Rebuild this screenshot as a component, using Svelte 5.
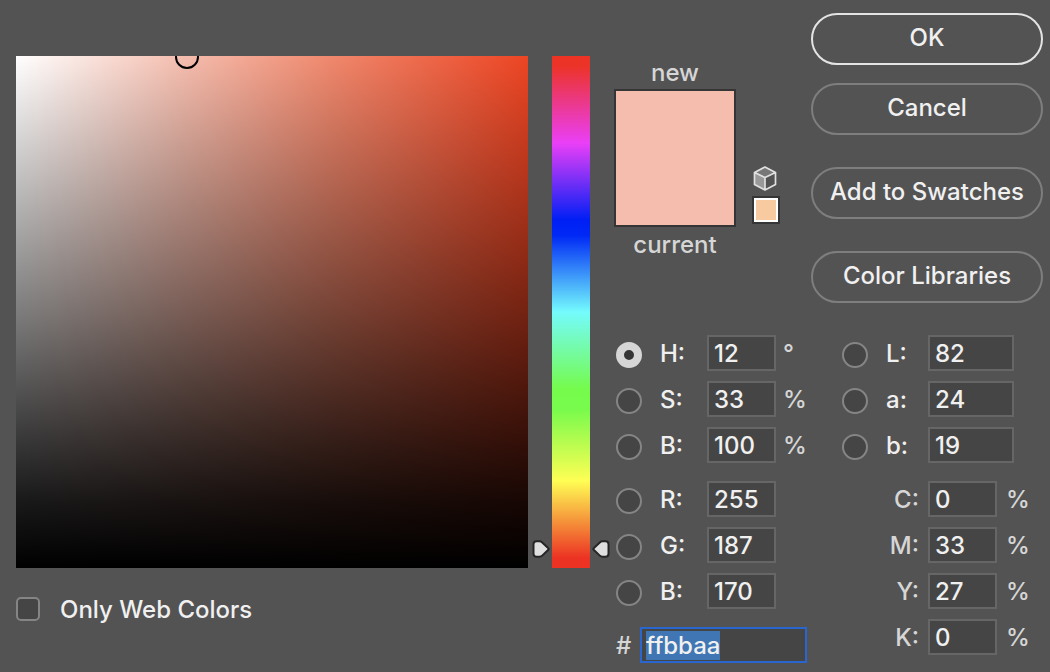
<script lang="ts">
  import { onMount } from 'svelte';

  let channel = $state('h');
  let webOnly = $state(false);
  let hue = $state(12);
  let hex = $state('ffbbaa');
  let marker = $state({ x: 33.4, y: 0.2 });
  let hexInput: HTMLInputElement;

  const hsb = [
    { id: 'h', label: 'H:', value: '12', unit: '°' },
    { id: 's', label: 'S:', value: '33', unit: '%' },
    { id: 'v', label: 'B:', value: '100', unit: '%' }
  ];
  const rgb = [
    { id: 'r', label: 'R:', value: '255', unit: '' },
    { id: 'g', label: 'G:', value: '187', unit: '' },
    { id: 'b', label: 'B:', value: '170', unit: '' }
  ];
  const lab = [
    { id: 'lab-l', label: 'L:', value: '82' },
    { id: 'lab-a', label: 'a:', value: '24' },
    { id: 'lab-b', label: 'b:', value: '19' }
  ];
  const cmyk = [
    { id: 'c', label: 'C:', value: '0' },
    { id: 'm', label: 'M:', value: '33' },
    { id: 'y', label: 'Y:', value: '27' },
    { id: 'k', label: 'K:', value: '0' }
  ];

  // the strip runs from 360 at the top to 0 at the bottom
  let huePos = $derived(((360 - hue) / 360) * 100);

  function pick(e: MouseEvent) {
    const box = (e.currentTarget as HTMLElement).getBoundingClientRect();
    marker = {
      x: ((e.clientX - box.left) / box.width) * 100,
      y: ((e.clientY - box.top) / box.height) * 100
    };
  }

  onMount(() => {
    hexInput.focus();
    hexInput.select();
  });
</script>

<main class="dialog">
  <section class="left">
    <div class="pickers">
      <button class="field" aria-label="Saturation and brightness" onclick={pick}>
        <span class="marker" style="left:{marker.x}%; top:{marker.y}%"></span>
      </button>
      <div class="hue">
        <div class="strip"></div>
        <input type="range" min="0" max="360" bind:value={hue} aria-label="Hue" />
        <svg class="arrow start" style="top:{huePos}%" width="18" height="18" viewBox="0 0 18 18">
          <path d="M4.500 1.300H7.500Q9 1.300 10.200 2.400L16.300 8.200Q17.200 9 16.300 9.800L10.200 15.600Q9 16.700 7.500 16.700H4.500Q1.500 16.700 1.500 13.700V4.300Q1.500 1.300 4.500 1.300Z" />
        </svg>
        <svg class="arrow end" style="top:{huePos}%" width="18" height="18" viewBox="0 0 18 18">
          <path d="M13.500 1.300H10.500Q9 1.300 7.800 2.400L1.700 8.200Q.8 9 1.700 9.800L7.800 15.600Q9 16.700 10.500 16.700H13.500Q16.500 16.700 16.500 13.700V4.300Q16.500 1.300 13.500 1.300Z" />
        </svg>
      </div>
    </div>
    <label class="web">
      <input type="checkbox" bind:checked={webOnly} />
      <span>Only Web Colors</span>
    </label>
  </section>

  <section class="right">
    <div class="top">
      <div class="preview">
        <span>new</span>
        <div class="swatch"></div>
        <span>current</span>
      </div>
      <div class="safe">
        <button class="cube" aria-label="Not a web safe color">
          <svg width="26" height="26" viewBox="0 0 26 26">
            <path d="M2.500 7.500L13 12.500V25L2.500 19.500Z" fill="#999" />
            <path d="M13 2L23.500 7.500L13 12.500L2.500 7.500Z" fill="#777" />
            <path d="M13 2L23.500 7.500V19.500L13 25L2.500 19.500V7.500ZM2.500 7.500L13 12.500L23.500 7.500M13 12.500V25" fill="none" stroke="#e0e0e0" stroke-width="1.700" stroke-linejoin="round" />
          </svg>
        </button>
        <button class="safe-color" aria-label="Use web safe color"></button>
      </div>
      <div class="buttons">
        <button class="primary">OK</button>
        <button>Cancel</button>
        <button class="spaced">Add to Swatches</button>
        <button class="spaced">Color Libraries</button>
      </div>
    </div>

    <div class="values">
      <div class="col">
        {#each [hsb, rgb] as group}
          <div class="group">
            {#each group as f}
              <div class="row">
                <input type="radio" name="channel" value={f.id} bind:group={channel} aria-label={f.label} />
                <label for={f.id}>{f.label}</label>
                <input type="text" id={f.id} value={f.value} />
                <span>{f.unit}</span>
              </div>
            {/each}
          </div>
        {/each}
        <div class="hex">
          <label for="hex">#</label>
          <input type="text" id="hex" bind:value={hex} bind:this={hexInput} spellcheck="false" />
        </div>
      </div>

      <div class="col">
        <div class="group">
          {#each lab as f}
            <div class="row lab">
              <input type="radio" name="channel" value={f.id} bind:group={channel} aria-label={f.label} />
              <label for={f.id}>{f.label}</label>
              <input type="text" id={f.id} value={f.value} />
            </div>
          {/each}
        </div>
        <div class="group">
          {#each cmyk as f}
            <div class="row cmyk">
              <label for={f.id}>{f.label}</label>
              <input type="text" id={f.id} value={f.value} />
              <span>%</span>
            </div>
          {/each}
        </div>
      </div>
    </div>
  </section>
</main>

<style>
  :global(body) { margin: 0; background: #535353; }

  .dialog { display: flex; padding: 13px 7px 9px 16px; color: #f0f0f0; font: 450 24px/30px Inter, 'Liberation Sans', sans-serif; }
  button, input { margin: 0; font: inherit; color: inherit; box-sizing: border-box; }
  button { padding: 0; border: 0; background: none; }

  .left { flex: 1; padding-top: 43px; }
  .pickers { display: flex; }
  .field {
    position: relative;
    flex: 1;
    aspect-ratio: 1;
    overflow: hidden;
    background:
      linear-gradient(to bottom, transparent, rgba(0, 0, 0, 0.51) 50%, rgba(0, 0, 0, 0.77) 74%, rgba(0, 0, 0, 0.9) 87%, #000),
      linear-gradient(to right, #fff, #f5bdae 33%, #f0876c 62%, #ed4523);
  }
  .marker { position: absolute; width: 24px; height: 24px; margin: -12px 0 0 -12px; box-sizing: border-box; border: 2px solid #000; border-radius: 50%; }

  .hue { position: relative; width: 86px; padding: 0 24px; box-sizing: border-box; display: flex; }
  .strip { flex: 1; background: linear-gradient(to bottom, #ec3323, #ec3328 2%, #ea3ff7 17%, #001ff5 32%, #0028f5 35%, #74fbfd 50%, #75fb4c 65%, #78fb4c 69%, #fffe54 83%, #ec3323 98%); }
  .hue input { position: absolute; inset: 0; width: 100%; height: 100%; opacity: 0; writing-mode: vertical-lr; direction: rtl; }
  .arrow { position: absolute; margin-top: -11px; pointer-events: none; fill: #e0e0e0; stroke: #262626; stroke-width: 2; }
  .start { left: 4px; }
  .end { right: 4px; }

  .web { display: flex; align-items: center; gap: 20px; margin-top: 25px; }
  .web span { padding-top: 2px; }
  input[type='checkbox'] { appearance: none; width: 24px; height: 24px; border: 2px solid #858585; border-radius: 5px; background: #454545; }
  input[type='checkbox']:checked { background: #d6d6d6; }

  .right { width: 429px; }
  .top { display: flex; }
  .preview { width: 122px; padding-top: 45px; text-align: center; color: #d6d6d6; }
  .preview span { display: block; }
  .swatch { height: 138px; margin: 1px 0 3px; box-sizing: border-box; border: 2px solid #353535; background: #f5bdae; }
  .safe { width: 75px; padding: 152px 0 0 16px; box-sizing: border-box; }
  .safe button { display: block; }
  .cube { height: 31px; }
  .cube svg { display: block; }
  .safe-color { width: 28px; height: 28px; border: 2px solid #353535; background: #f7cb9f; box-shadow: inset 0 0 0 2px #fff; }
  .safe .cube { display: flex; align-items: flex-start; }

  .buttons { flex: 1; display: flex; flex-direction: column; gap: 18px; }
  .buttons button { height: 52px; padding-bottom: 2px; border: 2px solid #7e7e7e; border-radius: 26px; }
  .buttons .primary { border-color: #e4e4e4; }
  .buttons .spaced { margin-top: 14px; }

  .values { display: flex; justify-content: space-between; margin-top: 32px; padding-left: 2px; }
  .col { display: flex; flex-direction: column; gap: 18px; }
  .group { display: flex; flex-direction: column; gap: 10px; }
  .row { display: grid; grid-template-columns: 44px 47px 69px 30px; align-items: center; height: 36px; }
  .row label, .row span, .hex label { padding-top: 2px; }
  .row span { padding-left: 7px; color: #d6d6d6; }
  .lab { grid-template-columns: 44px 42px 86px 29px; }
  .cmyk { grid-template-columns: 77px 69px 37px; column-gap: 9px; }
  .cmyk label { text-align: right; color: #d6d6d6; }
  .row.cmyk span { padding-left: 0; }

  input[type='radio'] { appearance: none; width: 26px; height: 26px; margin-top: 3px; border: 2px solid #858585; border-radius: 50%; background: #454545; }
  input[type='radio']:checked { border: 8px solid #d6d6d6; background: #353535; }
  input[type='text'] { width: 100%; height: 36px; padding: 1px 5px 0; border: 2px solid #666; border-radius: 0; background: #454545; outline: none; }

  .hex { display: flex; align-items: center; width: 191px; }
  .hex label { width: 24px; flex: none; color: #d6d6d6; }
  .hex input[type='text'] { padding: 0 4px; border-color: #2a66cf; }
  .hex input::selection { color: #f0f0f0; background: rgba(63, 118, 180, 0.99); }
</style>
